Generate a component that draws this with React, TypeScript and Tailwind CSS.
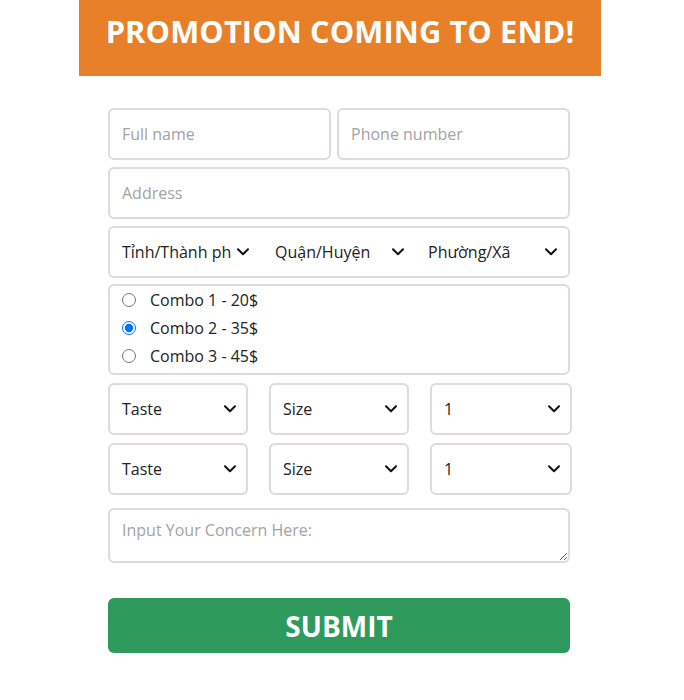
import { useState } from 'react';

function Chevron({ className = '' }: { className?: string }) {
  return (
    <svg viewBox="0 0 12 8" className={`h-[8px] w-[12px] shrink-0 ${className}`} fill="none">
      <path d="M1 1.2 6 6.2 11 1.2" stroke="#111" strokeWidth="2" strokeLinecap="round" strokeLinejoin="round" />
    </svg>
  );
}

const box = 'rounded-[6px] border-2 border-[#dedade] bg-white';

function FakeSelect({ label, className = '' }: { label: string; className?: string }) {
  return (
    <div className={`${box} flex h-[52px] items-center justify-between pl-[12px] pr-[10px] ${className}`}>
      <span className="text-[16px] text-[#222]">{label}</span>
      <Chevron />
    </div>
  );
}

const combos = ['Combo 1 - 20$', 'Combo 2 - 35$', 'Combo 3 - 45$'];

export default function App() {
  const [combo, setCombo] = useState(1);

  return (
    <div className="min-h-[700px] bg-white" style={{ fontFamily: '"Open Sans", "Liberation Sans", sans-serif' }}>
      <div className="ml-[79px] w-[522px]">
        <div className="flex h-[76px] items-center justify-center bg-[#e8802a] pb-[14px]">
          <h1 className="text-[30.8px] font-bold tracking-[0.1px] text-white">PROMOTION COMING TO END!</h1>
        </div>

        <form className="flex flex-col pl-[29px] pr-[31px] pt-[32px]" onSubmit={(e) => e.preventDefault()}>
          <div className="flex gap-[6px]">
            <input
              placeholder="Full name"
              className={`${box} h-[52px] w-[223px] px-[12px] text-[16px] outline-none placeholder:text-[#a3a3a3]`}
            />
            <input
              placeholder="Phone number"
              className={`${box} h-[52px] flex-1 px-[12px] text-[16px] outline-none placeholder:text-[#a3a3a3]`}
            />
          </div>

          <input
            placeholder="Address"
            className={`${box} mt-[7px] h-[52px] w-full px-[12px] text-[16px] outline-none placeholder:text-[#a3a3a3]`}
          />

          <div className={`${box} mt-[7px] flex h-[52px] items-center`}>
            <div className="flex flex-1 items-center gap-[6px] pl-[12px] pr-[14px]">
              <span className="overflow-hidden whitespace-nowrap text-[16px] text-[#222]">Tỉnh/Thành ph</span>
              <Chevron />
            </div>
            <div className="flex flex-1 items-center justify-between pl-[10px] pr-[12px]">
              <span className="text-[16px] text-[#222]">Quận/Huyện</span>
              <Chevron />
            </div>
            <div className="flex flex-1 items-center justify-between pl-[12px] pr-[11px]">
              <span className="text-[16px] text-[#222]">Phường/Xã</span>
              <Chevron />
            </div>
          </div>

          <div className={`${box} mt-[6px] flex h-[91px] flex-col justify-center pb-[3px] pl-[12px]`}>
            {combos.map((c, i) => (
              <label key={c} className="flex h-[29.5px] items-center gap-[14px] text-[16px] text-[#222]">
                <input
                  type="radio"
                  name="combo"
                  checked={combo === i}
                  onChange={() => setCombo(i)}
                  className="m-0 h-[14px] w-[14px]"
                />
                {c}
              </label>
            ))}
          </div>

          {[0, 1].map((r) => (
            <div key={r} className="-mr-[2px] mt-[8px] flex gap-[21px]">
              <FakeSelect label="Taste" className="w-[140px]" />
              <FakeSelect label="Size" className="w-[140px]" />
              <FakeSelect label="1" className="flex-1" />
            </div>
          ))}

          <textarea
            placeholder="Input Your Concern Here:"
            className={`${box} mt-[13px] h-[55px] w-full px-[12px] pt-[8px] text-[16px] outline-none placeholder:text-[#a3a3a3]`}
          />

          <button
            type="submit"
            className="mt-[35px] flex h-[55px] w-full items-center justify-center rounded-[6px] bg-[#2e9a5b] text-[28px] font-bold text-white"
          >
            SUBMIT
          </button>
        </form>
      </div>
    </div>
  );
}
